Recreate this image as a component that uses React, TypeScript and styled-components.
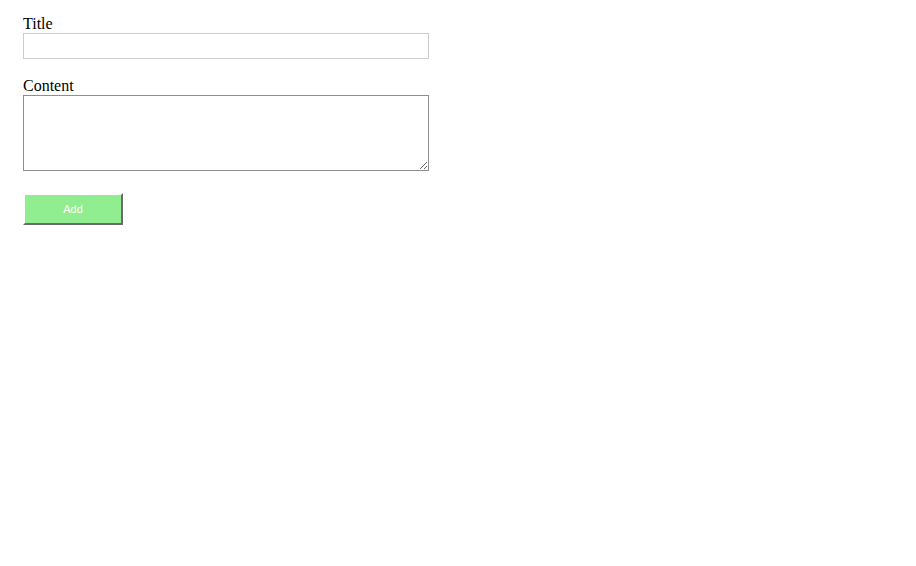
import React, { useState } from 'react'
import styled, { createGlobalStyle } from 'styled-components'

const GlobalStyle = createGlobalStyle`
  body {
    margin: 0;
    background: #fff;
    font-family: "Liberation Serif", "Times New Roman", serif;
    color: #000;
  }
`

const Form = styled.form`
  display: flex;
  flex-direction: column;
  align-items: flex-start;
  padding: 15px 23px;
`

const Field = styled.div`
  display: flex;
  flex-direction: column;
  margin-bottom: 18px;
`

const Label = styled.label`
  font-size: 16px;
  line-height: 18px;
`

const TitleInput = styled.input`
  box-sizing: border-box;
  width: 406px;
  height: 26px;
  margin: 0;
  padding: 2px 4px;
  border: 1px solid #cccccc;
  font-size: 13px;
  outline: none;
`

const ContentArea = styled.textarea`
  box-sizing: border-box;
  width: 406px;
  height: 76px;
  margin: 0;
  padding: 2px 4px;
  border: 1px solid #8e8e8e;
  font-size: 13px;
  display: block;
  outline: none;
`

const AddButton = styled.button`
  box-sizing: border-box;
  width: 100px;
  height: 32px;
  margin-top: 4px;
  border-style: solid;
  border-width: 2px;
  border-color: #ffffff #6b6b6b #6b6b6b #ffffff;
  background: #90ee90;
  color: #ffffff;
  font-family: "Liberation Sans", Arial, sans-serif;
  font-size: 11px;
  padding: 0;
  cursor: pointer;
`

export default function App() {
  const [title, setTitle] = useState('')
  const [content, setContent] = useState('')

  return (
    <>
      <GlobalStyle />
      <Form onSubmit={e => e.preventDefault()}>
        <Field>
          <Label htmlFor="title">Title</Label>
          <TitleInput id="title" value={title} onChange={e => setTitle(e.target.value)} />
        </Field>
        <Field>
          <Label htmlFor="content">Content</Label>
          <ContentArea id="content" value={content} onChange={e => setContent(e.target.value)} />
        </Field>
        <AddButton type="submit">Add</AddButton>
      </Form>
    </>
  )
}
